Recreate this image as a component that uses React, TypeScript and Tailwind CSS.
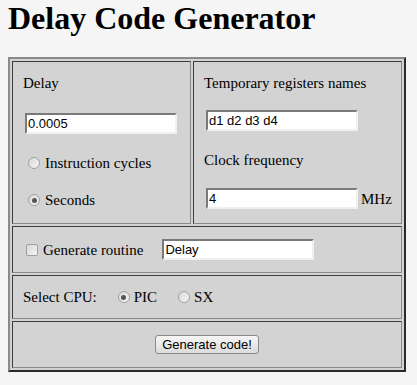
import React from 'react';

const serif = "font-['Liberation_Serif','Times_New_Roman',serif]";
const sans = "font-['Liberation_Sans',Arial,sans-serif]";

function Radio({ checked }: { checked?: boolean }) {
  return (
    <span className="inline-flex h-[12px] w-[12px] shrink-0 items-center justify-center rounded-full border border-[#a0a0a0] bg-gradient-to-br from-[#d8d8d8] to-[#f6f6f6]">
      {checked && <span className="h-[5px] w-[5px] rounded-full bg-[#555]" />}
    </span>
  );
}

function Checkbox() {
  return (
    <span className="inline-block h-[12px] w-[12px] shrink-0 rounded-[2px] border border-[#a0a0a0] bg-gradient-to-br from-[#d8d8d8] to-[#f6f6f6]" />
  );
}

function TextBox({ value }: { value: string }) {
  return (
    <div
      className={`flex h-[21px] w-[152px] items-center border-2 border-t-[#7a7a7a] border-l-[#7a7a7a] border-b-[#f0f0f0] border-r-[#f0f0f0] bg-white pl-[1px] text-[13px] leading-none text-black ${sans}`}
    >
      {value}
    </div>
  );
}

const cell =
  'border border-t-[#3c3c3c] border-l-[#3c3c3c] border-b-[#8a8a8a] border-r-[#8a8a8a] bg-[#d3d3d3]';

export default function App() {
  return (
    <div className={`min-h-[385px] w-[417px] bg-[#f5f5f5] pl-2 text-black ${serif}`}>
      <h1 className="mb-[21px] text-[32px] font-bold leading-[36px]">Delay Code Generator</h1>

      <div className="flex w-[398px] flex-col gap-[2px] border-2 border-t-[#8a8a8a] border-l-[#8a8a8a] border-b-[#2a2a2a] border-r-[#2a2a2a] bg-[#d3d3d3] p-[2px] text-[15px] leading-[18px]">
        <div className="flex h-[163px] gap-[2px]">
          <div className={`${cell} w-[179px] pl-[10px] pt-[12px]`}>
            <div>Delay</div>
            <div className="mt-[21px] ml-[2px]">
              <TextBox value="0.0005" />
            </div>
            <div className="mt-[20px] flex items-center gap-[5px] pl-[5px]">
              <Radio />
              <span>Instruction cycles</span>
            </div>
            <div className="mt-[19px] flex items-center gap-[5px] pl-[5px]">
              <Radio checked />
              <span>Seconds</span>
            </div>
          </div>
          <div className={`${cell} flex-1 pl-[10px] pt-[12px]`}>
            <div>Temporary registers names</div>
            <div className="mt-[18px] ml-[2px]">
              <TextBox value="d1 d2 d3 d4" />
            </div>
            <div className="mt-[20px]">Clock frequency</div>
            <div className="mt-[19px] ml-[2px] flex items-center gap-[3px]">
              <TextBox value="4" />
              <span>MHz</span>
            </div>
          </div>
        </div>

        <div className={`${cell} flex h-[47px] items-center pl-[13px]`}>
          <Checkbox />
          <span className="ml-[5px]">Generate routine</span>
          <div className="ml-[19px]">
            <TextBox value="Delay" />
          </div>
        </div>

        <div className={`${cell} flex h-[44px] items-center pl-[10px]`}>
          <span>Select CPU:</span>
          <span className="ml-[21px] flex items-center gap-[4px]">
            <Radio checked />
            <span>PIC</span>
          </span>
          <span className="ml-[21px] flex items-center gap-[4px]">
            <Radio />
            <span>SX</span>
          </span>
        </div>

        <div className={`${cell} flex h-[47px] items-center justify-center`}>
          <button
            className={`h-[19px] rounded-[3px] border border-[#8a8a8a] bg-gradient-to-b from-[#f6f6f6] to-[#dcdcdc] px-[6px] text-[13px] leading-none text-black ${sans}`}
          >
            Generate code!
          </button>
        </div>
      </div>
    </div>
  );
}
